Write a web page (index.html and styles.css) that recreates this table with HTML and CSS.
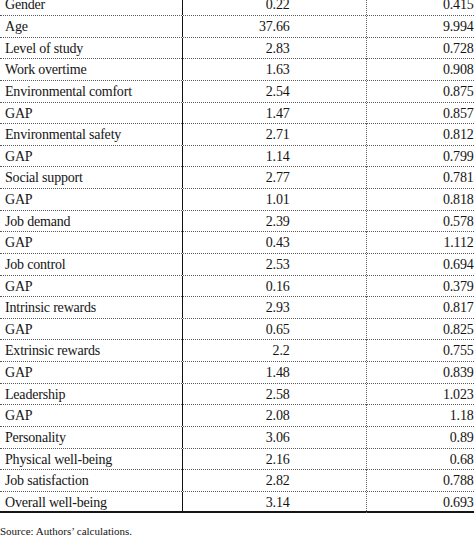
FILE: index.html
```html
<!DOCTYPE html>
<html lang="en">
<head>
<meta charset="utf-8">
<title>Descriptive statistics</title>
<link rel="stylesheet" href="styles.css">
</head>
<body>
<div class="table">
  <div class="row"><div class="c name">Gender</div><div class="c mean">0.22</div><div class="c sd">0.415</div></div>
  <div class="row"><div class="c name">Age</div><div class="c mean">37.66</div><div class="c sd">9.994</div></div>
  <div class="row"><div class="c name">Level of study</div><div class="c mean">2.83</div><div class="c sd">0.728</div></div>
  <div class="row"><div class="c name">Work overtime</div><div class="c mean">1.63</div><div class="c sd">0.908</div></div>
  <div class="row"><div class="c name">Environmental comfort</div><div class="c mean">2.54</div><div class="c sd">0.875</div></div>
  <div class="row"><div class="c name">GAP</div><div class="c mean">1.47</div><div class="c sd">0.857</div></div>
  <div class="row"><div class="c name">Environmental safety</div><div class="c mean">2.71</div><div class="c sd">0.812</div></div>
  <div class="row"><div class="c name">GAP</div><div class="c mean">1.14</div><div class="c sd">0.799</div></div>
  <div class="row"><div class="c name">Social support</div><div class="c mean">2.77</div><div class="c sd">0.781</div></div>
  <div class="row"><div class="c name">GAP</div><div class="c mean">1.01</div><div class="c sd">0.818</div></div>
  <div class="row"><div class="c name">Job demand</div><div class="c mean">2.39</div><div class="c sd">0.578</div></div>
  <div class="row"><div class="c name">GAP</div><div class="c mean">0.43</div><div class="c sd">1.112</div></div>
  <div class="row"><div class="c name">Job control</div><div class="c mean">2.53</div><div class="c sd">0.694</div></div>
  <div class="row"><div class="c name">GAP</div><div class="c mean">0.16</div><div class="c sd">0.379</div></div>
  <div class="row"><div class="c name">Intrinsic rewards</div><div class="c mean">2.93</div><div class="c sd">0.817</div></div>
  <div class="row"><div class="c name">GAP</div><div class="c mean">0.65</div><div class="c sd">0.825</div></div>
  <div class="row"><div class="c name">Extrinsic rewards</div><div class="c mean">2.2</div><div class="c sd">0.755</div></div>
  <div class="row"><div class="c name">GAP</div><div class="c mean">1.48</div><div class="c sd">0.839</div></div>
  <div class="row"><div class="c name">Leadership</div><div class="c mean">2.58</div><div class="c sd">1.023</div></div>
  <div class="row"><div class="c name">GAP</div><div class="c mean">2.08</div><div class="c sd">1.18</div></div>
  <div class="row"><div class="c name">Personality</div><div class="c mean">3.06</div><div class="c sd">0.89</div></div>
  <div class="row"><div class="c name">Physical well-being</div><div class="c mean">2.16</div><div class="c sd">0.68</div></div>
  <div class="row"><div class="c name">Job satisfaction</div><div class="c mean">2.82</div><div class="c sd">0.788</div></div>
  <div class="row last"><div class="c name">Overall well-being</div><div class="c mean">3.14</div><div class="c sd">0.693</div></div>
</div>
<p class="source">Source: Authors’ calculations.</p>
</body>
</html>
```

FILE: styles.css
```css
html, body {
  margin: 0;
  padding: 0;
  background: #ffffff;
}

body {
  font-family: "Liberation Serif", "Times New Roman", Times, serif;
  font-size: 14px;
  color: #141414;
  width: 474px;
  overflow: hidden;
}

.table {
  margin-top: -5.63px;
  display: flex;
  flex-direction: column;
}

.row {
  display: grid;
  grid-template-columns: 183px 184px 1fr;
  height: 21.63px;
  box-sizing: border-box;
  border-bottom: 1px dotted #5a5a5a;
}

.row.last {
  border-bottom: 2px solid #151515;
}

.c {
  font-family: "Liberation Serif", "Times New Roman", serif;
  font-size: 14px;
  letter-spacing: -0.2px;
  line-height: 21px;
  white-space: nowrap;
  box-sizing: border-box;
}

.name {
  padding-left: 5px;
  border-right: 1px solid #111111;
}

.mean {
  text-align: right;
  padding-right: 76.5px;
  border-right: 1px dotted #6a6a6a;
}

.sd {
  text-align: right;
  padding-right: 0.5px;
}

.source {
  margin: 11px 0 0 0;
  font-family: "Liberation Serif", "Times New Roman", serif;
  font-size: 11px;
  line-height: 14px;
}
```
